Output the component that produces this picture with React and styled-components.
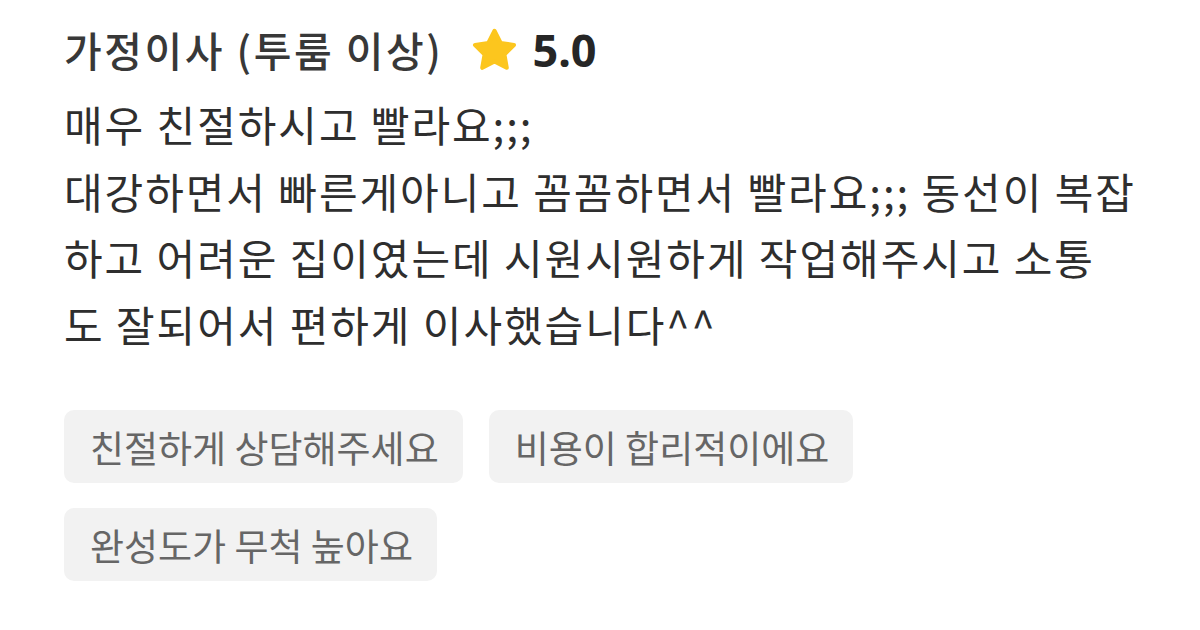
import React from 'react'
import styled, { createGlobalStyle } from 'styled-components'

const GlobalStyle = createGlobalStyle`
body {
  margin: 0;
  background: #ffffff;
  font-family: "Noto Sans CJK KR", "Noto Sans", sans-serif;
}
`
const Container = styled.div`
width: 1200px;
height: 630px;
box-sizing: border-box;
padding: 21px 0 0 64px;
display: flex;
flex-direction: column;
`
const Header = styled.div`
display: flex;
align-items: center;
height: 56px;
`
const Title = styled.h1`
margin: 0 28px 0 0;
font-size: 41px;
font-weight: 500;
color: #383838;
letter-spacing: 2.5px;
`
const Rating = styled.span`
display: flex;
align-items: center;
gap: 14px;
font-family: "Noto Sans", sans-serif;
font-size: 45px;
font-weight: 700;
color: #262626;
`
const Body = styled.p`
margin: 14px 0 0;
font-size: 42px;
font-weight: 400;
line-height: 66.5px;
color: #2e2e2e;
letter-spacing: 1.95px;
white-space: nowrap;
`
const Tags = styled.div`
display: flex;
flex-wrap: wrap;
gap: 25px 26px;
margin-top: 53px;
width: 900px;
`
const Tag = styled.span`
display: inline-flex;
align-items: center;
height: 73px;
padding: 0 24px 0 26px;
box-sizing: border-box;
border-radius: 10px;
background: #f2f2f2;
color: #666;
font-size: 37px;
`

const Star = () => (
  <svg width="47" height="43" viewBox="0 0 24 22">
    <path
      d="M12 1.5l3.1 6.2 6.8 1-4.9 4.8 1.2 6.8L12 17.1l-6.2 3.2 1.2-6.8-4.9-4.8 6.8-1z"
      fill="#fcc61e"
      stroke="#fcc61e"
      strokeWidth="2.2"
      strokeLinejoin="round"
    />
  </svg>
)

const lines = [
  '매우 친절하시고 빨라요;;;',
  '대강하면서 빠른게아니고 꼼꼼하면서 빨라요;;; 동선이 복잡',
  '하고 어려운 집이였는데 시원시원하게 작업해주시고 소통',
  '도 잘되어서 편하게 이사했습니다^^',
]

const tags = ['친절하게 상담해주세요', '비용이 합리적이에요', '완성도가 무척 높아요']

const App = () => {
  return (
    <Container>
      <GlobalStyle />
      <Header>
        <Title>가정이사 (투룸 이상)</Title>
        <Rating>
          <Star />
          5.0
        </Rating>
      </Header>
      <Body>
        {lines.map((l, i) => (
          <React.Fragment key={i}>
            {l}
            {i < lines.length - 1 && <br />}
          </React.Fragment>
        ))}
      </Body>
      <Tags>
        {tags.map(t => <Tag key={t}>{t}</Tag>)}
      </Tags>
    </Container>
  )
}

export default App
